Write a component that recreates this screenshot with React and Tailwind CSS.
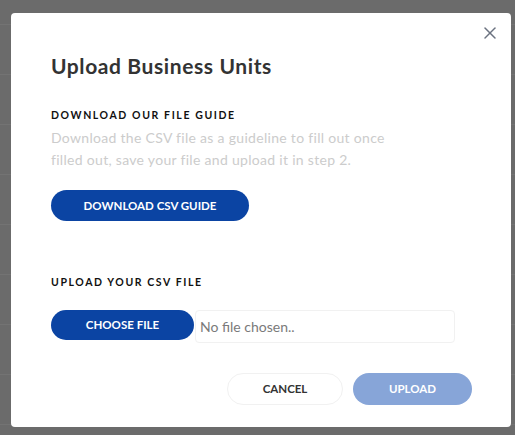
import { X } from "lucide-react";

const rows = Array.from({ length: 9 });

export default function App() {
  return (
    <div
      className="relative w-[515px] h-[435px] overflow-hidden bg-[#6b6b6b]"
      style={{ fontFamily: "Lato, 'Open Sans', sans-serif" }}
    >
      {/* faint table rows behind the overlay */}
      <div className="flex flex-col">
        {rows.map((_, i) => (
          <div key={i} className="h-[50px] border-b border-[#737373] first:h-[25px]" />
        ))}
      </div>

      {/* modal */}
      <div className="absolute left-[11px] top-[13px] w-[500px] h-[414px] bg-white rounded-[4px] px-[40px] pt-[39px]">
        <button className="absolute right-[11px] top-[10px] text-[#6b7280]">
          <X size={20} strokeWidth={1.8} />
        </button>

        <h2 className="text-[21px] font-bold text-[#333333] leading-[28px] tracking-[0.6px]">
          Upload Business Units
        </h2>

        <h3 className="mt-[28px] text-[10.5px] font-bold tracking-[1.6px] text-[#111111] leading-[14px]">
          DOWNLOAD OUR FILE GUIDE
        </h3>
        <p className="mt-[5px] text-[14px] leading-[22px] text-[#cccccc] tracking-[0.3px] w-[350px]">
          Download the CSV file as a guideline to fill out once filled out, save your file and upload it in step 2.
        </p>

        <button className="mt-[19px] w-[198px] h-[31px] rounded-full bg-[#0b44a3] text-white text-[11.5px] font-bold">
          DOWNLOAD CSV GUIDE
        </button>

        <h3 className="mt-[54px] text-[10.5px] font-bold tracking-[1.6px] text-[#111111] leading-[14px]">
          UPLOAD YOUR CSV FILE
        </h3>

        <div className="mt-[21px] flex items-start">
          <button className="w-[143px] h-[30px] rounded-full bg-[#0b44a3] text-white text-[11.5px] font-bold">
            CHOOSE FILE
          </button>
          <div className="ml-px w-[260px] h-[33px] border border-[#f1f1f1] rounded-[4px] flex items-center px-[4px] text-[14px] text-[#7a7a7a]">
            No file chosen..
          </div>
        </div>

        <div className="mt-[30px] flex justify-end gap-[10px] mr-[-1px]">
          <button className="w-[116px] h-[32px] rounded-full border border-[#f1f1f1] bg-white text-[#333333] text-[11.5px] font-bold">
            CANCEL
          </button>
          <button className="w-[119px] h-[32px] rounded-full bg-[#87a5d8] text-white text-[11.5px] font-bold">
            UPLOAD
          </button>
        </div>
      </div>
    </div>
  );
}
